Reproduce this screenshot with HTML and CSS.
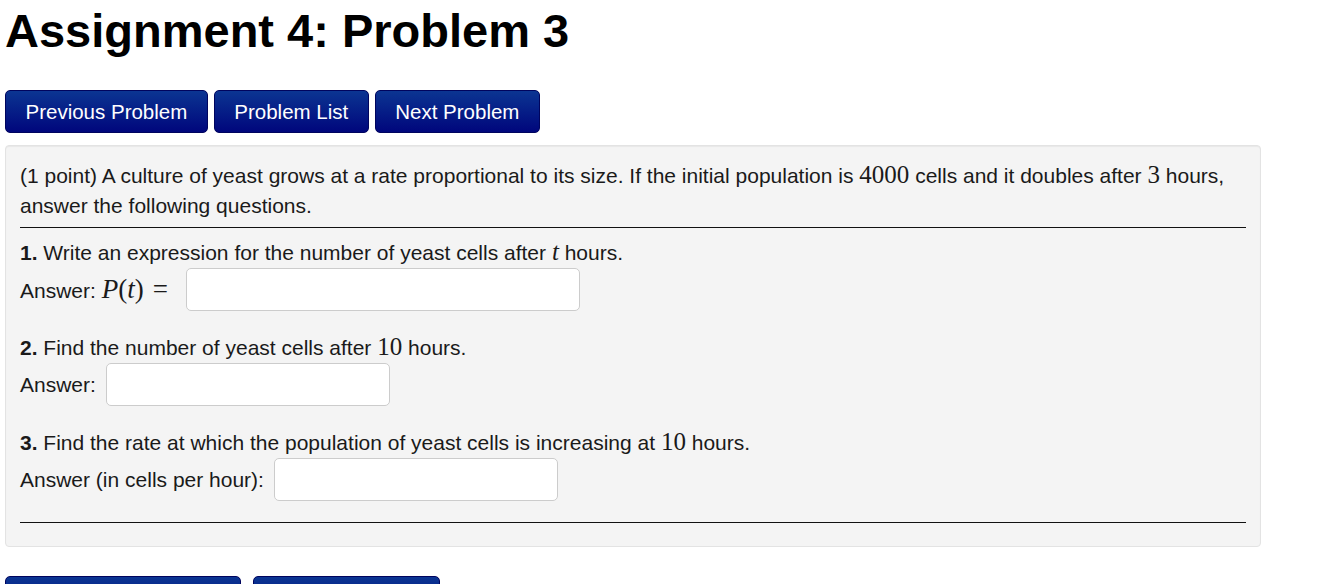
FILE: index.html
```html
<!DOCTYPE html>
<html lang="en">
<head>
    <meta charset="UTF-8">
    <title>Assignment 4: Problem 3</title>
    <link rel="stylesheet" href="styles.css">
</head>
<body>
    <div class="page">
        <h1>Assignment 4: Problem 3</h1>

        <div class="nav-buttons">
            <a class="btn" href="#">Previous Problem</a>
            <a class="btn" href="#">Problem List</a>
            <a class="btn" href="#">Next Problem</a>
        </div>

        <div class="problem">
            <p class="intro">(1 point) A culture of yeast grows at a rate proportional to its size. If the initial population is <span class="math">4000</span> cells and it doubles after <span class="math">3</span> hours, answer the following questions.</p>
            <hr>

            <div class="question">
                <div class="q-text"><b>1.</b> Write an expression for the number of yeast cells after <span class="math"><i>t</i></span> hours.</div>
                <div class="answer-row">
                    <span>Answer: <span class="math"><i>P</i>(<i>t</i>)<span class="eq">=</span></span></span>
                    <input type="text" class="answer wide">
                </div>
            </div>

            <div class="question">
                <div class="q-text"><b>2.</b> Find the number of yeast cells after <span class="math">10</span> hours.</div>
                <div class="answer-row">
                    <span>Answer:</span>
                    <input type="text" class="answer">
                </div>
            </div>

            <div class="question">
                <div class="q-text"><b>3.</b> Find the rate at which the population of yeast cells is increasing at <span class="math">10</span> hours.</div>
                <div class="answer-row">
                    <span>Answer (in cells per hour):</span>
                    <input type="text" class="answer">
                </div>
            </div>

            <hr class="end">
        </div>

        <div class="submit-buttons">
            <a class="btn preview" href="#">Preview My Answers</a>
            <a class="btn check" href="#">Check Answers</a>
        </div>
    </div>
</body>
</html>
```

FILE: styles.css
```css
body {
    margin: 0;
    font-family: 'Liberation Sans', Arial, sans-serif;
    color: #1a1a1a;
    background: white;
}
.page {
    padding: 0 5px;
    width: 1256px;
}
h1 {
    font-size: 47px;
    line-height: 53px;
    margin: 4px 0 33px;
    color: #000;
}
.nav-buttons,
.submit-buttons {
    display: flex;
    gap: 6px;
}
.btn {
    display: block;
    height: 43px;
    line-height: 41px;
    padding: 0 19.5px;
    box-sizing: border-box;
    font-size: 20.5px;
    color: white;
    text-decoration: none;
    border-radius: 5px;
    background: linear-gradient(#0b3592, #00067c);
    border: 1px solid #00045e;
}
.problem {
    margin-top: 12px;
    padding: 15px 14px 23px;
    background: #f4f4f4;
    border: 1px solid #e3e3e3;
    border-radius: 4px;
    box-shadow: inset 0 1px 1px rgba(0,0,0,0.05);
    font-size: 21px;
}
.intro {
    margin: 0;
    line-height: 30px;
}
hr {
    border: none;
    border-top: 1px solid #111;
    margin: 6px 0 10px;
}
hr.end {
    margin: 21px 0 0;
}
.question + .question {
    margin-top: 22px;
}
.q-text {
    line-height: 30px;
}
.answer-row {
    display: flex;
    align-items: center;
    gap: 10px;
    height: 43px;
}
.math {
    font-family: 'Liberation Serif', 'Times New Roman', serif;
    font-size: 25px;
    line-height: 1;
}
.answer-row .math {
    font-size: 27px;
}
.eq {
    margin: 0 8px 0 9px;
}
.answer {
    width: 284px;
    height: 43px;
    box-sizing: border-box;
    border: 1px solid #cccccc;
    border-radius: 5px;
    background: white;
    font-size: 20px;
    padding: 4px 8px;
}
.answer.wide {
    width: 394px;
}
.submit-buttons {
    margin-top: 29px;
    gap: 12px;
}
.btn.preview {
    width: 236px;
}
.btn.check {
    width: 187px;
}
```
